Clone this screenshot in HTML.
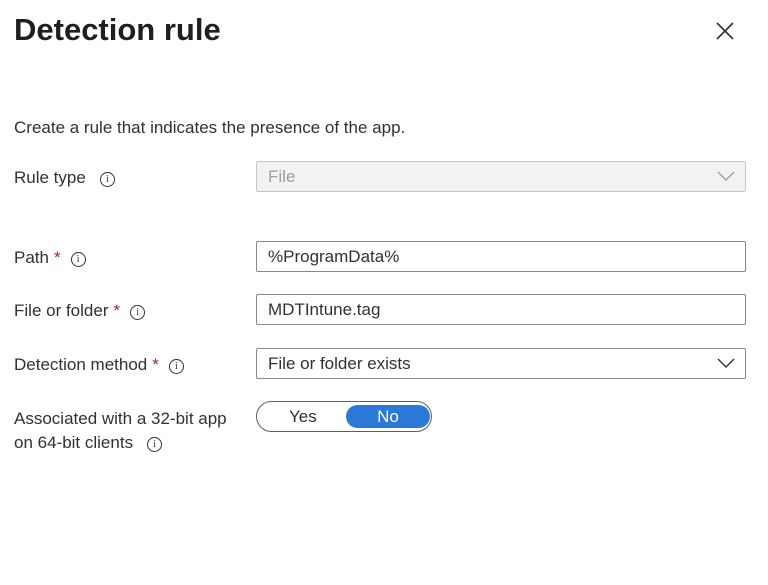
<!DOCTYPE html>
<html><head><style>
body{margin:0;width:768px;height:585px;background:#fff;font-family:"Liberation Sans",sans-serif;color:#323130;position:relative;overflow:hidden}
.a{position:absolute}
.t{font-size:17px;line-height:20px}
.box{position:absolute;left:256px;width:488px;height:29px;border:1px solid #8a8886;border-radius:2px;box-sizing:content-box}
.box span{position:absolute;left:11px;top:5px;font-size:17px;line-height:20px}
.i{display:inline-block;width:13px;height:13px;border:1px solid #323130;border-radius:50%;font-size:10px;line-height:13px;text-align:center;vertical-align:1px;margin-left:10px;font-family:"Liberation Serif",serif}
.s{color:#a4262c;margin-left:5px}
</style></head><body>
<div class="a" style="left:14px;top:12px;font-size:31px;font-weight:bold;color:#201f1e">Detection rule</div>
<svg class="a" style="left:716px;top:22px" width="18" height="18"><path d="M1 1L17 17M17 1L1 17" stroke="#323130" stroke-width="1.6"/></svg>
<div class="a t" style="left:14px;top:118px">Create a rule that indicates the presence of the app.</div>
<div class="a t" style="left:14px;top:168px">Rule type<span class="i" style="margin-left:14px">i</span></div>
<div class="box" style="top:161px;background:#f3f2f1;border-color:#c8c6c4"><span style="color:#a19f9d">File</span><svg class="a" style="right:10px;top:9px" width="18" height="11"><path d="M1 1L9 9L17 1" stroke="#a19f9d" fill="none" stroke-width="1.4"/></svg></div>
<div class="a t" style="left:14px;top:248px">Path<span class="s">*</span><span class="i">i</span></div>
<div class="box" style="top:241px"><span>%ProgramData%</span></div>
<div class="a t" style="left:14px;top:301px">File or folder<span class="s">*</span><span class="i">i</span></div>
<div class="box" style="top:294px"><span>MDTIntune.tag</span></div>
<div class="a t" style="left:14px;top:355px">Detection method<span class="s">*</span><span class="i">i</span></div>
<div class="box" style="top:348px"><span>File or folder exists</span><svg class="a" style="right:10px;top:9px" width="18" height="11"><path d="M1 1L9 9L17 1" stroke="#323130" fill="none" stroke-width="1.4"/></svg></div>
<div class="a t" style="left:14px;top:407px;line-height:24px">Associated with a 32-bit app<br>on 64-bit clients<span class="i" style="margin-left:14px">i</span></div>
<div class="a" style="left:256px;top:401px;width:174px;height:29px;border:1px solid #605e5c;border-radius:16px">
<div class="a t" style="left:32px;top:5px">Yes</div>
<div class="a" style="left:89px;top:3px;width:84px;height:23px;background:#2b79d6;border-radius:12px;color:#fff;font-size:17px;line-height:23px;text-align:center">No</div>
</div>
</body></html>
